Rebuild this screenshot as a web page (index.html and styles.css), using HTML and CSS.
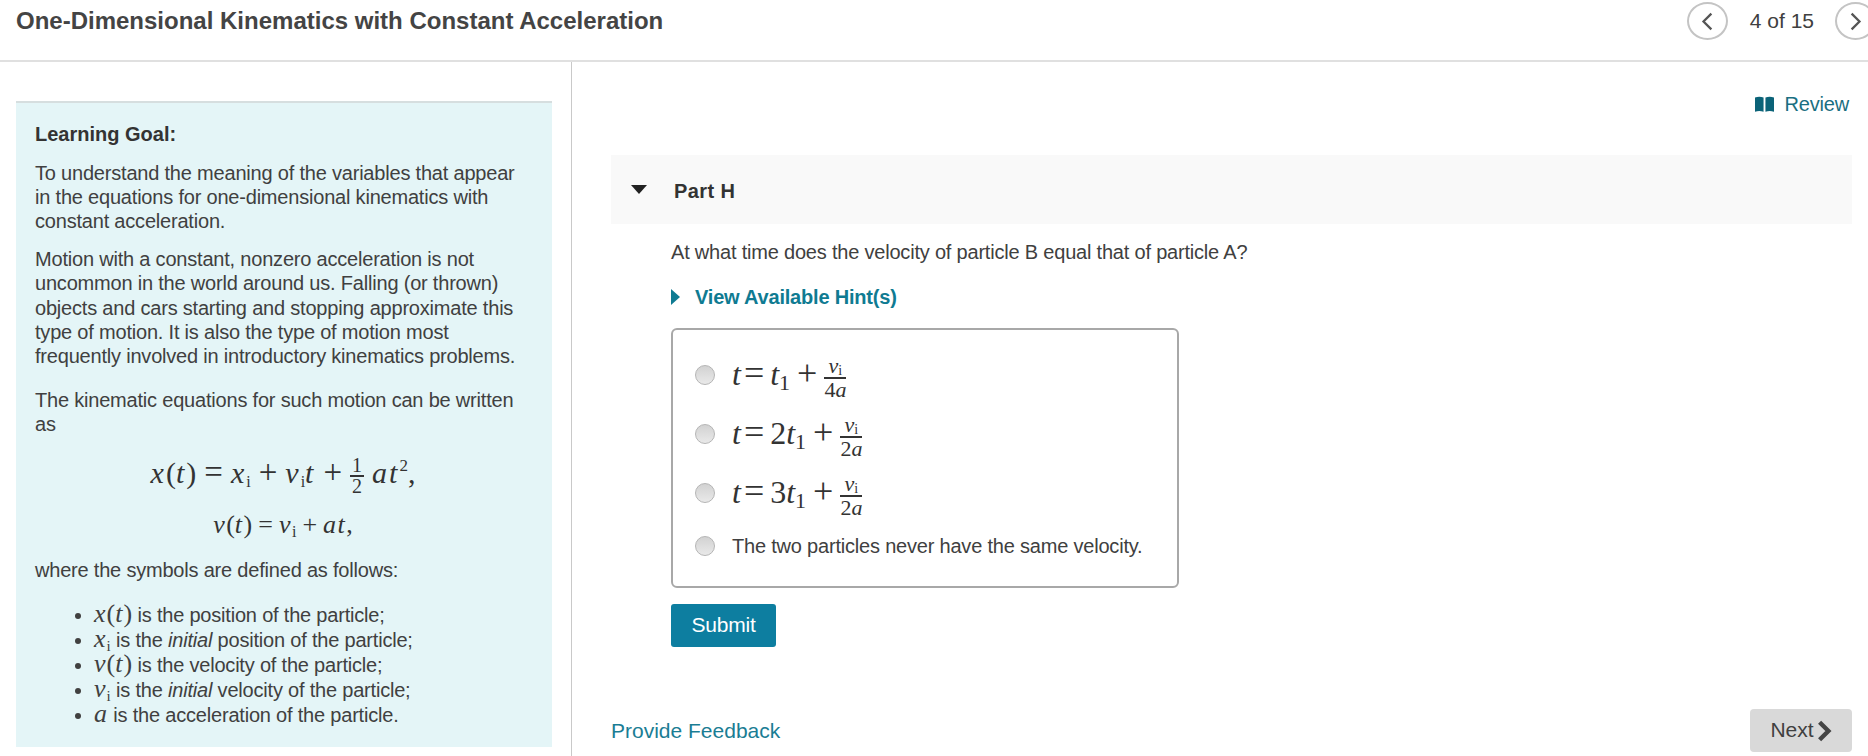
FILE: index.html
```html
<!DOCTYPE html>
<html lang="en">
<head>
<meta charset="utf-8">
<title>One-Dimensional Kinematics with Constant Acceleration</title>
<link rel="stylesheet" href="styles.css">
</head>
<body>
<header class="topbar">
  <h1 class="title">One-Dimensional Kinematics with Constant Acceleration</h1>
  <nav class="pager">
    <span class="circle"><svg viewBox="0 0 16 24" width="14" height="21"><path d="M13 3 4 12l9 9" fill="none" stroke="#555" stroke-width="2.6"/></svg></span>
    <span class="count">4 of 15</span>
    <span class="circle"><svg viewBox="0 0 16 24" width="14" height="21"><path d="M3 3l9 9-9 9" fill="none" stroke="#555" stroke-width="2.6"/></svg></span>
  </nav>
</header>
<main class="layout">
  <aside class="side">
    <section class="goal">
      <h2 class="goal-title">Learning Goal:</h2>
      <p class="p1">To understand the meaning of the variables that appear in the equations for one-dimensional kinematics with constant acceleration.</p>
      <p class="p2">Motion with a constant, nonzero acceleration is not uncommon in the world around us. Falling (or thrown) objects and cars starting and stopping approximate this type of motion. It is also the type of motion most frequently involved in introductory kinematics problems.</p>
      <p class="p3">The kinematic equations for such motion can be written as</p>
      <div class="eq eq1"><span class="m">x</span><span class="r">(</span><span class="m">t</span><span class="r">)</span><span class="r op">=</span><span class="m">x</span><sub class="r">i</sub><span class="r op">+</span><span class="m">v</span><sub class="r">i</sub><span class="m">t</span><span class="r op">+</span><span class="frac small"><span class="num r">1</span><span class="den r">2</span></span><span class="m gap">at</span><sup class="r">2</sup><span class="r">,</span></div>
      <div class="eq eq2"><span class="m">v</span><span class="r">(</span><span class="m">t</span><span class="r">)</span><span class="r op">=</span><span class="m">v</span><sub class="r">i</sub><span class="r op">+</span><span class="m">at</span><span class="r">,</span></div>
      <p class="p4">where the symbols are defined as follows:</p>
      <ul class="defs">
        <li><span class="m">x</span><span class="r">(</span><span class="m">t</span><span class="r">)</span> is the position of the particle;</li>
        <li><span class="m">x</span><sub class="r">i</sub> is the <em>initial</em> position of the particle;</li>
        <li><span class="m">v</span><span class="r">(</span><span class="m">t</span><span class="r">)</span> is the velocity of the particle;</li>
        <li><span class="m">v</span><sub class="r">i</sub> is the <em>initial</em> velocity of the particle;</li>
        <li><span class="m">a</span> is the acceleration of the particle.</li>
      </ul>
    </section>
  </aside>
  <section class="content">
    <div class="review-row">
      <a class="review"><svg viewBox="0 0 20 17" width="19" height="17"><path d="M0 1c3-1 6-1 9 0v15c-3-1-6-1-9 0zM11 1c3-1 6-1 9 0v15c-3-1-6-1-9 0z" fill="#0b6378"/></svg>Review</a>
    </div>
    <div class="part-bar"><span class="caret-down"></span><span class="part-name">Part H</span></div>
    <div class="part-body">
      <p class="question">At what time does the velocity of particle B equal that of particle A?</p>
      <div class="hint"><span class="caret-right"></span>View Available Hint(s)</div>
      <div class="choices">
        <div class="choice"><span class="radio"></span><span class="formula"><span class="m">t</span><span class="r eqs">=</span><span class="m">t</span><sub class="r">1</sub><span class="r op">+</span><span class="frac"><span class="num"><span class="m">v</span><sub class="r">i</sub></span><span class="den"><span class="r">4</span><span class="m">a</span></span></span></span></div>
        <div class="choice"><span class="radio"></span><span class="formula"><span class="m">t</span><span class="r eqs">=</span><span class="r">2</span><span class="m">t</span><sub class="r">1</sub><span class="r op">+</span><span class="frac"><span class="num"><span class="m">v</span><sub class="r">i</sub></span><span class="den"><span class="r">2</span><span class="m">a</span></span></span></span></div>
        <div class="choice"><span class="radio"></span><span class="formula"><span class="m">t</span><span class="r eqs">=</span><span class="r">3</span><span class="m">t</span><sub class="r">1</sub><span class="r op">+</span><span class="frac"><span class="num"><span class="m">v</span><sub class="r">i</sub></span><span class="den"><span class="r">2</span><span class="m">a</span></span></span></span></div>
        <div class="choice text"><span class="radio"></span><span>The two particles never have the same velocity.</span></div>
      </div>
      <button class="submit">Submit</button>
    </div>
    <div class="footer-row">
      <a class="feedback">Provide Feedback</a>
      <button class="next"><span class="next-label">Next</span><svg viewBox="0 0 14 20" width="16" height="22"><path d="M3 2l8 8-8 8" fill="none" stroke="#444" stroke-width="4"/></svg></button>
    </div>
  </section>
</main>
</body>
</html>
```
FILE: styles.css
```css
html, body { margin: 0; padding: 0; height: 756px; overflow: hidden; background: #fff; }
body { font-family: "Liberation Sans", Arial, sans-serif; font-size: 20px; color: #404040; width: 1868px; letter-spacing: -0.2px; }
.topbar { height: 60px; border-bottom: 2px solid #e0e0e0; display: flex; justify-content: space-between; align-items: flex-start; padding-left: 16px; }
.title { margin: 7px 0 0; font-size: 24px; line-height: 28px; font-weight: bold; color: #444; letter-spacing: 0; }
.pager { display: flex; align-items: center; margin-top: 2px; margin-right: -8px; }
.circle { flex: none; width: 41px; height: 38px; box-sizing: border-box; border: 2px solid #c4c4c4; border-radius: 50%; display: flex; align-items: center; justify-content: center; }
.count { margin: 0 21px 0 22px; font-size: 21px; color: #404040; letter-spacing: 0; }
.layout { display: flex; height: 694px; }
.side { width: 555px; flex: none; border-right: 1px solid #c9c9c9; padding: 39px 0 0 16px; }
.goal { width: 536px; height: 646px; box-sizing: border-box; background: #e4f5f7; border-top: 2px solid #d6dedf; padding: 19px 35px 0 19px; line-height: 24.2px; }
.goal p { margin: 0; }
.goal-title { margin: 0; font-size: 20px; line-height: 24px; color: #333; letter-spacing: 0; }
.p1 { padding-top: 15px; }
.p2 { padding-top: 13.5px; }
.p3 { padding-top: 19.5px; }
.eq { text-align: center; color: #333; white-space: nowrap; letter-spacing: 0; padding-left: 14px; }
.eq1 { margin-top: 9.4px; height: 54px; line-height: 54px; font-size: 30px; }
.eq1 .m { letter-spacing: 2px; }
.eq1 .op { font-size: 33px; margin: 0 8px; }
.eq2 { margin-top: 7px; height: 36px; line-height: 36px; font-size: 26px; }
.eq2 .m { letter-spacing: 1.5px; }
.p4 { padding-top: 16px; }
.defs { margin: 20px 0 0; padding: 0 0 0 59px; line-height: 25px; }
.defs li { height: 25px; white-space: nowrap; }
.defs .m, .defs .r { font-size: 26px; letter-spacing: 0; line-height: 0; }
.defs .m { letter-spacing: 1px; }
.defs sub.r { font-size: 15px; vertical-align: -4px; }
.m { font-family: "Liberation Serif", serif; font-style: italic; }
.r { font-family: "Liberation Serif", serif; font-style: normal; }
sub.r { font-size: 16px; line-height: 0; vertical-align: -4px; }
sup.r { font-size: 17px; line-height: 0; vertical-align: 12px; }
.op { margin: 0 7px; }
.eq2 .op { margin: 0 6px; }
.eqs { margin: 0 6px 0 3px; font-size: 36px; }
.gap { margin-left: 8px; }
.frac { display: inline-flex; flex-direction: column; align-items: center; vertical-align: middle; font-size: 22px; line-height: 21px; }
.frac .num { border-bottom: 2px solid #333; padding: 0 2px 1px; line-height: 21px; width: 100%; text-align: center; box-sizing: border-box; }
.frac.small { font-size: 20px; }
.frac.small .num, .frac.small .den { line-height: 18px; }
.frac sub.r { font-size: 14px; vertical-align: -2px; }
.content { flex: 1; display: flex; flex-direction: column; padding: 0 16px 0 39px; min-width: 0; }
.review-row { display: flex; justify-content: flex-end; height: 93px; padding-top: 30px; box-sizing: border-box; padding-right: 3px; }
.review { display: flex; align-items: center; gap: 11px; height: 24px; color: #1a6f82; font-size: 20px; }
.part-bar { height: 69px; background: #f9f9f9; display: flex; align-items: center; }
.caret-down { width: 0; height: 0; border-left: 8px solid transparent; border-right: 8px solid transparent; border-top: 9px solid #222; margin-left: 20px; margin-top: -1px; }
.part-name { margin-left: 27px; padding-top: 3px; font-weight: bold; color: #333; font-size: 20px; letter-spacing: 0.4px; }
.part-body { padding-left: 60px; flex: 1; }
.question { margin: 16px 0 0; line-height: 24px; }
.hint { margin-top: 21px; line-height: 24px; font-weight: bold; color: #0f7b92; display: flex; align-items: center; }
.caret-right { width: 0; height: 0; border-top: 8px solid transparent; border-bottom: 8px solid transparent; border-left: 9px solid #0f7b92; margin-right: 15px; }
.choices { margin-top: 19px; width: 508px; height: 260px; box-sizing: border-box; border: 2px solid #a8a8a8; border-radius: 6px; padding: 15px 0 0 22px; }
.choice { display: flex; align-items: center; height: 59px; }
.choice.text { height: 34px; margin-top: 7px; }
.radio { width: 18px; height: 18px; border-radius: 50%; border: 1px solid #b5b5b5; background: linear-gradient(#d2d2d2, #e9e9e9); margin-right: 17px; flex: none; }
.formula { font-size: 32px; color: #333; white-space: nowrap; letter-spacing: 0; line-height: 44px; padding-top: 2px; }
.formula sub.r { font-size: 22px; vertical-align: -5px; }
.formula .frac sub.r { font-size: 14px; vertical-align: -2px; }
.formula .op { margin: 0 7px; font-size: 36px; }
.submit { display: block; margin-top: 16px; width: 105px; height: 43px; background: #0d7ea0; color: #fff; border: none; border-radius: 3px; font: 21px "Liberation Sans", Arial, sans-serif; letter-spacing: -0.2px; padding: 0 0 2px; }
.footer-row { display: flex; justify-content: space-between; align-items: center; height: 43px; margin-bottom: 4px; }
.feedback { color: #1a7d94; font-size: 21px; letter-spacing: 0; }
.next { width: 102px; height: 43px; background: #d9d9d9; border: none; border-radius: 4px; color: #404040; font: 21px "Liberation Sans", Arial, sans-serif; display: flex; align-items: center; justify-content: center; gap: 2px; padding: 0; }
.next-label { padding-bottom: 2px; }
```
